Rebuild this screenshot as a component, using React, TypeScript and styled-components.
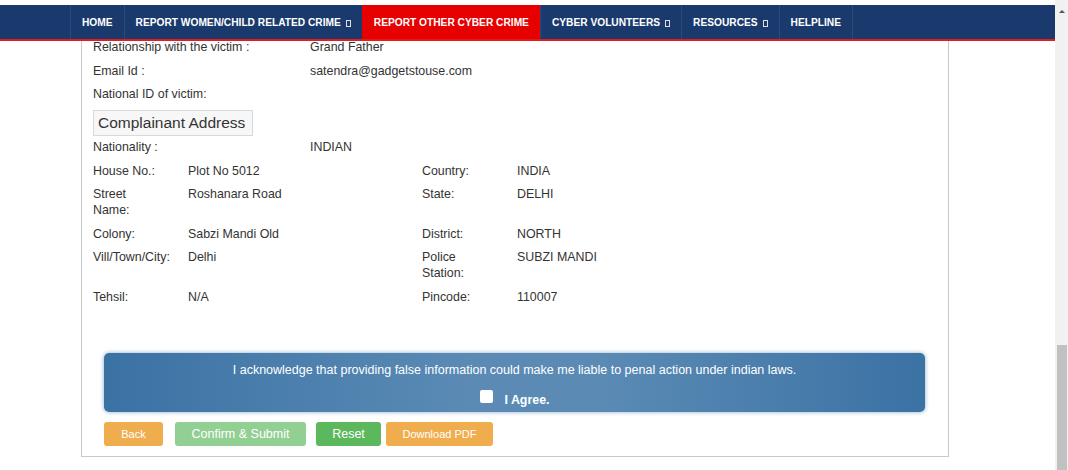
import React from "react";
import styled, { createGlobalStyle } from "styled-components";

const Global = createGlobalStyle`
  html, body { margin: 0; padding: 0; overflow: hidden; background: #fff; }
  body { font-family: "Liberation Sans", Arial, sans-serif; color: #333; }
  * { box-sizing: border-box; }
`;

const Page = styled.div`
  display: flex;
  width: 1068px;
  height: 470px;
  overflow: hidden;
`;

const Main = styled.div`
  position: relative;
  flex: 1;
  height: 470px;
  overflow: hidden;
`;

const Header = styled.header`
  position: absolute;
  top: 0;
  left: 0;
  right: 0;
  padding-top: 5px;
  background: #fff;
  z-index: 2;
`;

const NavBar = styled.nav`
  display: flex;
  height: 36px;
  padding-left: 70px;
  background: #1a3a6e;
  border-bottom: 2px solid #e31b1b;
`;

const NavItem = styled.a<{ $active?: boolean }>`
  display: flex;
  align-items: center;
  padding: 0 11px;
  border-left: 1px solid ${(p) => (p.$active ? "#e60000" : "#2c4b7d")};
  background: ${(p) => (p.$active ? "#e60000" : "transparent")};
  color: #fff;
  font-size: 10.2px;
  font-weight: bold;
  text-transform: uppercase;
  white-space: nowrap;
  text-decoration: none;
  &:last-child { border-right: 1px solid #2c4b7d; }
`;

const Caret = styled.span`
  display: inline-block;
  width: 5px;
  height: 7px;
  margin-left: 5px;
  border: 1px solid rgba(255, 255, 255, 0.85);
  position: relative;
  top: 1px;
`;

const Content = styled.div`
  padding-top: 39px;
`;

const Panel = styled.section`
  margin-left: 81px;
  width: 868px;
  border: 1px solid #c8c8c8;
  border-top: none;
  padding: 0 11px 10px 11px;
  font-size: 12.4px;
  color: #333;
`;

const InfoRow = styled.div`
  display: grid;
  grid-template-columns: 217px 1fr;
  line-height: 16px;
  margin-bottom: 7.5px;
`;

const SectionTitle = styled.div`
  width: fit-content;
  height: 26px;
  line-height: 24px;
  margin: 7.5px 0 3.5px 0;
  padding: 0 7px 0 4px;
  border: 1px solid #d9d9d9;
  background: #f7f7f7;
  font-size: 15.5px;
  color: #333;
`;

const AddrGrid = styled.div`
  display: grid;
  grid-template-columns: 95px 234px 95px 1fr;
  row-gap: 7.5px;
  line-height: 16px;
`;

const Label = styled.div`
  padding-right: 30px;
`;

const Value = styled.div``;

const Ack = styled.div`
  margin: 48.5px 12px 0 11px;
  height: 59px;
  padding-top: 9px;
  border-radius: 5px;
  background: linear-gradient(to right, #3b72a4 0%, #5b8bb5 45%, #5b8bb5 60%, #3b72a4 100%);
  box-shadow: 0 0 4px rgba(59, 114, 164, 0.6);
  color: #fff;
  text-align: center;
`;

const AckText = styled.p`
  margin: 0;
  line-height: 16px;
  font-size: 12.5px;
`;

const AgreeLine = styled.label`
  display: flex;
  justify-content: center;
  align-items: center;
  gap: 12px;
  margin-top: 12px;
  font-weight: bold;
  font-size: 12.4px;
`;

const Check = styled.span`
  display: inline-block;
  width: 13px;
  height: 13px;
  background: #fff;
  border-radius: 2px;
  position: relative;
  top: -1px;
`;

const AgreeText = styled.span`
  position: relative;
  top: 3px;
`;

const ButtonRow = styled.div`
  display: flex;
  margin: 10px 0 0 11px;
`;

const Button = styled.button<{ $bg: string; $w: number; $fs: number; $ml?: number }>`
  width: ${(p) => p.$w}px;
  height: 24px;
  margin-left: ${(p) => p.$ml ?? 0}px;
  padding: 0;
  border: none;
  border-radius: 3px;
  background: ${(p) => p.$bg};
  color: #fff;
  font-family: "Liberation Sans", Arial, sans-serif;
  font-size: ${(p) => p.$fs}px;
  cursor: pointer;
`;

const Scrollbar = styled.div`
  width: 13px;
  height: 470px;
  background: #f1f1f1;
  display: flex;
  flex-direction: column;
  align-items: center;
`;

const Arrow = styled.div`
  margin-top: 10px;
  width: 0;
  height: 0;
  border-left: 3px solid transparent;
  border-right: 3px solid transparent;
  border-bottom: 3px solid #555;
`;

const Thumb = styled.div`
  margin-top: auto;
  width: 10px;
  height: 125px;
  background: #c1c1c1;
`;

const navItems: { label: string; caret?: boolean; active?: boolean }[] = [
  { label: "HOME" },
  { label: "REPORT WOMEN/CHILD RELATED CRIME", caret: true },
  { label: "REPORT OTHER CYBER CRIME", active: true },
  { label: "CYBER VOLUNTEERS", caret: true },
  { label: "RESOURCES", caret: true },
  { label: "HELPLINE" },
];

const addrRows: [string, string, string, string][] = [
  ["House No.:", "Plot No 5012", "Country:", "INDIA"],
  ["Street Name:", "Roshanara Road", "State:", "DELHI"],
  ["Colony:", "Sabzi Mandi Old", "District:", "NORTH"],
  ["Vill/Town/City:", "Delhi", "Police Station:", "SUBZI MANDI"],
  ["Tehsil:", "N/A", "Pincode:", "110007"],
];

export default function App() {
  return (
    <>
      <Global />
      <Page>
        <Main>
          <Header>
            <NavBar>
              {navItems.map((n) => (
                <NavItem key={n.label} $active={n.active}>
                  {n.label}
                  {n.caret && <Caret />}
                </NavItem>
              ))}
            </NavBar>
          </Header>
          <Content>
            <Panel>
              <InfoRow>
                <div>Relationship with the victim :</div>
                <div>Grand Father</div>
              </InfoRow>
              <InfoRow>
                <div>Email Id :</div>
                <div>satendra@gadgetstouse.com</div>
              </InfoRow>
              <InfoRow>
                <div>National ID of victim:</div>
                <div></div>
              </InfoRow>
              <SectionTitle>Complainant Address</SectionTitle>
              <InfoRow>
                <div>Nationality :</div>
                <div>INDIAN</div>
              </InfoRow>
              <AddrGrid>
                {addrRows.map((r) => (
                  <React.Fragment key={r[0]}>
                    <Label>{r[0]}</Label>
                    <Value>{r[1]}</Value>
                    <Label>{r[2]}</Label>
                    <Value>{r[3]}</Value>
                  </React.Fragment>
                ))}
              </AddrGrid>
              <Ack>
                <AckText>
                  I acknowledge that providing false information could make me liable to penal action under indian laws.
                </AckText>
                <AgreeLine>
                  <Check />
                  <AgreeText>I Agree.</AgreeText>
                </AgreeLine>
              </Ack>
              <ButtonRow>
                <Button $bg="#f0ad4e" $w={59} $fs={11}>Back</Button>
                <Button $bg="#92cf92" $w={131} $fs={12.5} $ml={12}>Confirm &amp; Submit</Button>
                <Button $bg="#5cb85c" $w={65} $fs={12.5} $ml={10}>Reset</Button>
                <Button $bg="#f0ad4e" $w={107} $fs={11} $ml={5}>Download PDF</Button>
              </ButtonRow>
            </Panel>
          </Content>
        </Main>
        <Scrollbar>
          <Arrow />
          <Thumb />
        </Scrollbar>
      </Page>
    </>
  );
}
